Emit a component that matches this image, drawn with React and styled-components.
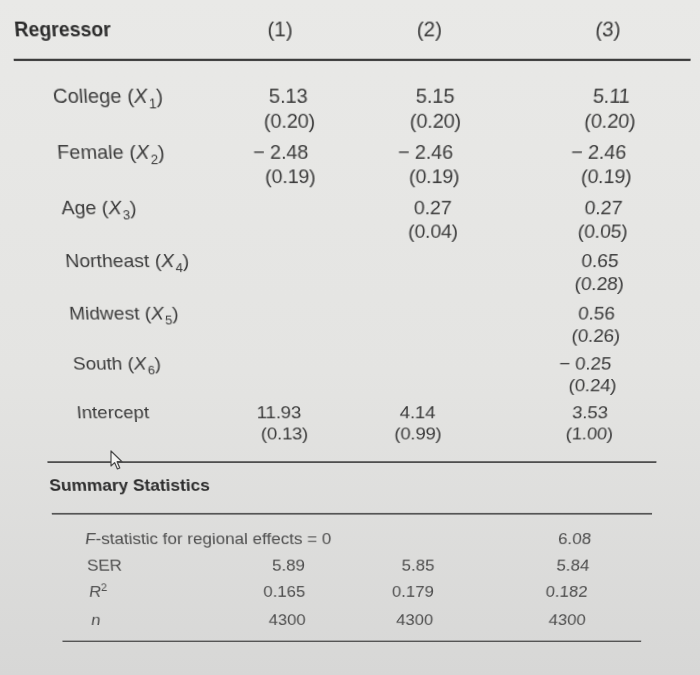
import styled, { createGlobalStyle } from "styled-components";

const GlobalStyle = createGlobalStyle`
  html, body {
    margin: 0;
    padding: 0;
    overflow: hidden;
  }
  body {
    width: 700px;
    height: 675px;
    background: linear-gradient(180deg, #e9e9e7 0%, #e4e4e2 55%, #d7d7d6 100%);
    font-family: "Liberation Sans", Arial, sans-serif;
    color: #3a3a3a;
  }
`;

// nudge: the book sets some intercept entries a little further left
const coefRows = [
  { label: "College", sub: 1, cells: [["5.13", "(0.20)"], ["5.15", "(0.20)"], ["5.11", "(0.20)"]] },
  { label: "Female", sub: 2, cells: [["\u2212 2.48", "(0.19)"], ["\u2212 2.46", "(0.19)"], ["\u2212 2.46", "(0.19)"]] },
  { label: "Age", sub: 3, cells: [null, ["0.27", "(0.04)"], ["0.27", "(0.05)"]] },
  { label: "Northeast", sub: 4, cells: [null, null, ["0.65", "(0.28)"]] },
  { label: "Midwest", sub: 5, cells: [null, null, ["0.56", "(0.26)"]] },
  { label: "South", sub: 6, cells: [null, null, ["\u2212 0.25", "(0.24)"]] },
  { label: "Intercept", nudge: [10, 11, 0], cells: [["11.93", "(0.13)"], ["4.14", "(0.99)"], ["3.53", "(1.00)"]] },
];

const stats = [
  { key: "f", values: ["", "", "6.08"] },
  { key: "ser", values: ["5.89", "5.85", "5.84"] },
  { key: "r2", values: ["0.165", "0.179", "0.182"] },
  { key: "n", values: ["4300", "4300", "4300"] },
];

const StatName = ({ kind }) => {
  if (kind === "f") return <><Ital>F</Ital>-statistic for regional effects = 0</>;
  if (kind === "r2") return <><Ital>R</Ital><Sup>2</Sup></>;
  if (kind === "n") return <Ital>n</Ital>;
  return "SER";
};

const App = () => {
  return (
    <Shell>
      <GlobalStyle />
      <Page>
        <Table>
          <HeaderRow>
            <HeadLabel>Regressor</HeadLabel>
            <HeadCol>(1)</HeadCol>
            <HeadCol>(2)</HeadCol>
            <HeadCol>(3)</HeadCol>
          </HeaderRow>
          <Rule $top={14} $thick={2} />

          <Body>
            {coefRows.map((row) => (
              <Row key={row.label}>
                <Label>
                  {row.label}
                  {row.sub && (
                    <>
                      {" ("}
                      <Ital>X</Ital>
                      <Sub>{row.sub}</Sub>
                      {")"}
                    </>
                  )}
                </Label>
                {row.cells.map((cell, i) => (
                  <Cell key={i} $nudge={row.nudge ? row.nudge[i] : 0}>
                    {cell && (
                      <>
                        <Coef>{cell[0]}</Coef>
                        <span>{cell[1]}</span>
                      </>
                    )}
                  </Cell>
                ))}
              </Row>
            ))}
          </Body>

          <Rule $top={19} $thick={1.6} $color="#4e4e4e" />
          <SummaryTitle>Summary Statistics</SummaryTitle>
          <Rule $top={19} $thick={1.6} $color="#555" />

          <Stats>
            {stats.map((s) => (
              <StatRow key={s.key} $last={s.key === "n"}>
                <StatLabel>
                  <StatName kind={s.key} />
                </StatLabel>
                {s.values.map((v, j) => (
                  <StatValue key={j}>{v}</StatValue>
                ))}
              </StatRow>
            ))}
          </Stats>
          <Rule $top={9} $thick={2} $color="#555" />
        </Table>
      </Page>

      {/* mouse pointer caught in the photo */}
      <Pointer width="14" height="21" viewBox="0 0 14 21">
        <path
          d="M1 1 L1 16 L4.6 12.6 L7.4 19 L9.8 18 L7.1 11.7 L12 11.7 Z"
          fill="#f4f4f2"
          stroke="#4a4a4a"
          strokeWidth="1.2"
          strokeLinejoin="round"
        />
      </Pointer>
    </Shell>
  );
};

const Shell = styled.div`
  position: relative;
  width: 700px;
  height: 675px;
  overflow: hidden;
`;

/* the table is photographed at an angle: top edge nearer the camera */
const Page = styled.div`
  width: 700px;
  padding-top: 31px;
  transform-origin: 350px 337.5px;
  transform: perspective(1000px) rotateX(-15deg);
`;

const Table = styled.div`
  width: 630px;
  margin-left: 37px;
`;

const grid = `
  display: grid;
  grid-template-columns: 200px 80px 138px 165px 1fr;
`;

const HeaderRow = styled.div`
  ${grid}
  line-height: 24px;
  color: #2a2a2a;
`;

const HeadLabel = styled.div`
  padding-left: 3px;
  font-size: 18px;
  font-weight: 700;
`;

const HeadCol = styled.div`
  text-align: right;
  padding-right: 20px;
  font-size: 19px;
  color: #3a3a3a;
`;

const Rule = styled.div`
  height: ${(p) => p.$thick}px;
  margin-top: ${(p) => p.$top}px;
  background: ${(p) => p.$color || "#3c3c3c"};
`;

const Body = styled.div`
  display: grid;
  row-gap: 6.4px;
  margin-top: 20px;
`;

const Row = styled.div`
  ${grid}
  font-size: 19px;
  line-height: 23px;
  color: #3c3c3c;
`;

const Label = styled.div`
  padding-left: 34px;
  white-space: nowrap;
`;

const Ital = styled.i`
  font-style: italic;
`;

const Sub = styled.span`
  font-size: 13px;
  vertical-align: -5px;
  line-height: 0;
  margin-left: 1px;
`;

const Sup = styled.span`
  font-size: 12px;
  vertical-align: 7px;
  line-height: 0;
`;

const Cell = styled.div`
  display: flex;
  flex-direction: column;
  align-items: flex-end;
  padding-right: ${(p) => p.$nudge}px;
  white-space: nowrap;
  letter-spacing: -0.2px;
`;

const Coef = styled.span`
  padding-right: 7px;
`;

const SummaryTitle = styled.div`
  margin-top: 13px;
  font-size: 18px;
  line-height: 24px;
  font-weight: 700;
  color: #2e2e2e;
`;

const Stats = styled.div`
  margin-top: 13px;
`;

const StatRow = styled.div`
  ${grid}
  margin-top: ${(p) => (p.$last ? 3 : 0)}px;
  font-size: 18px;
  line-height: 31px;
  color: #4e4e4e;
`;

const StatLabel = styled.div`
  padding-left: 33px;
  white-space: nowrap;
`;

const StatValue = styled.div`
  text-align: right;
  padding-right: 15px;
`;

const Pointer = styled.svg`
  position: absolute;
  left: 110px;
  top: 450px;
`;

export default App;
